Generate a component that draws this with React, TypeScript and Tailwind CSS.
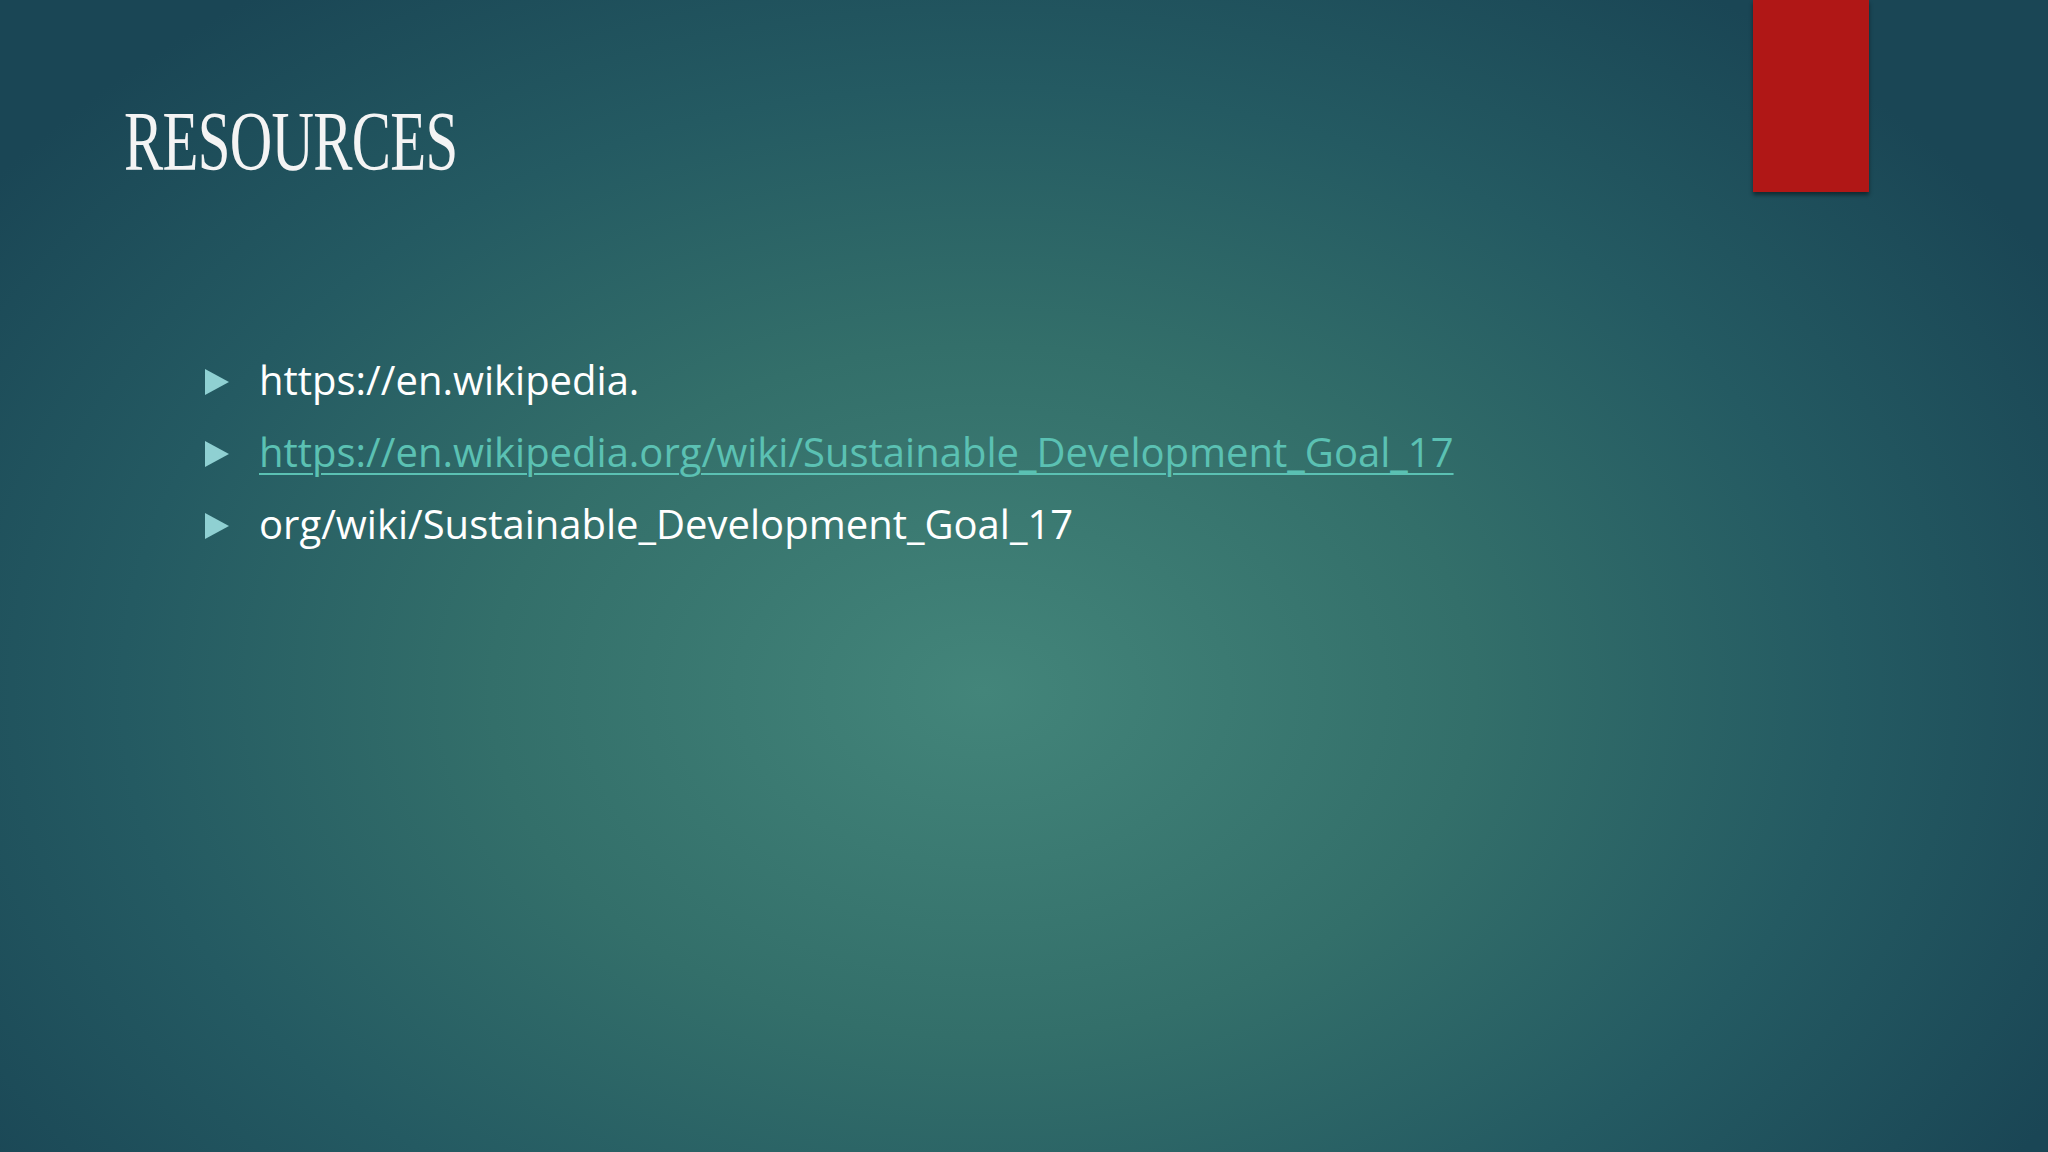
const items = [
  { text: 'https://en.wikipedia.', link: false },
  { text: 'https://en.wikipedia.org/wiki/Sustainable_Development_Goal_17', link: true },
  { text: 'org/wiki/Sustainable_Development_Goal_17', link: false },
];

export default function App() {
  return (
    <div className="relative w-[2048px] h-[1152px] overflow-hidden bg-[radial-gradient(ellipse_60%_75%_at_48%_60%,#43857a_0%,#336f6a_40%,#245a62_70%,#1a4655_100%)]">
      {/* red accent bar */}
      <div className="absolute left-[1753px] top-0 w-[116px] h-[192px] bg-[#b01716] shadow-[0_3px_4px_rgba(0,0,0,0.45)]" />

      <div className="pl-[124px] pt-[100px]">
        <h1 className="origin-left scale-x-[0.7] text-[84px] leading-none text-[#f4f4f4] font-[family-name:Liberation_Serif,serif] tracking-[-1px]">
          RESOURCES
        </h1>
      </div>

      <ul className="mt-[170px] pl-[205px] flex flex-col gap-[20px] font-[family-name:Open_Sans,sans-serif] text-[40px] leading-[52px]">
        {items.map((item, i) => (
          <li key={i} className="flex items-center gap-[30px]">
            <svg width="24" height="26" viewBox="0 0 24 26" className="shrink-0 mt-[4px]">
              <polygon points="0,0 24,13 0,26" fill="#8fd0d2" />
            </svg>
            {item.link ? (
              <span className="text-[#5bc1b3] underline underline-offset-[6px] decoration-2">{item.text}</span>
            ) : (
              <span className="text-white">{item.text}</span>
            )}
          </li>
        ))}
      </ul>
    </div>
  );
}
